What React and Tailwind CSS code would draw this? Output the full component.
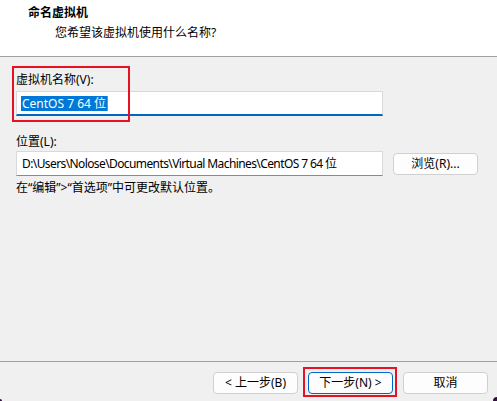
import React from 'react';

const font = "font-['Noto_Sans','Noto_Sans_CJK_SC',sans-serif]";

function Button({ children, primary }) {
  return (
    <button
      className={
        'h-[22px] w-[85px] rounded-[4px] bg-[#fdfdfd] text-[12px] leading-none text-black ' +
        (primary ? 'border border-[#0067c0]' : 'border border-[#d0d0d0]')
      }
    >
      {children}
    </button>
  );
}

export default function App() {
  return (
    <div className={`relative flex h-[401px] w-[497px] flex-col overflow-hidden bg-[#f0f0f0] text-[12px] text-black ${font}`}>
      {/* header */}
      <div className="h-[57px] border-b border-[#a0a0a0] bg-white">
        <div className="pl-[28px] pt-[5px] text-[12px] font-bold leading-[16px]">命名虚拟机</div>
        <div className="pl-[55px] pt-[4px] leading-[16px]">您希望该虚拟机使用什么名称?</div>
      </div>

      {/* form */}
      <div className="px-[16px]">
        <div className="pt-[15px] leading-[16px]">虚拟机名称(V):</div>
        <div className="mt-[3px] flex h-[25px] w-[367px] items-center border border-b-2 border-[#d9d9d9] border-b-[#0067c0] bg-white pl-[4px]">
          <span className="bg-[#0078d7] px-[1px] leading-[15px] text-white">CentOS 7 64 位</span>
          <span className="h-[15px] w-[1px] bg-[#e07b00]" />
        </div>

        <div className="mt-[18px] leading-[16px]">位置(L):</div>
        <div className="mt-[1px] flex items-center gap-[10px]">
          <div className="flex h-[25px] w-[367px] items-center border border-[#d9d9d9] border-b-[#8a8a8a] bg-white pl-[5px] tracking-[-0.6px] whitespace-nowrap">
            D:\Users\Nolose\Documents\Virtual Machines\CentOS 7 64 位
          </div>
          <Button>浏览(R)...</Button>
        </div>
        <div className="mt-[4px] leading-[16px]">在“编辑”&gt;“首选项”中可更改默认位置。</div>
      </div>

      <div className="flex-1" />

      {/* footer buttons */}
      <div className="flex justify-end gap-[10px] border-t border-[#a0a0a0] pb-[7px] pr-[9px] pt-[10px]">
        <Button>&lt; 上一步(B)</Button>
        <Button primary>下一步(N) &gt;</Button>
        <Button>取消</Button>
      </div>

      {/* red highlight frames */}
      <div className="pointer-events-none absolute left-[12px] top-[66px] h-[56px] w-[118px] border-2 border-[#e81123]" />
      <div className="pointer-events-none absolute left-[303px] top-[367px] h-[30px] w-[94px] border-2 border-[#e81123]" />

      {/* desktop corners */}
      <div className="absolute bottom-0 right-0 h-[4px] w-[4px] rounded-tl-full bg-[#3a0a45]" />
      <div className="absolute bottom-0 left-0 h-[2px] w-[2px] rounded-tr-full bg-[#3a0a45]" />
    </div>
  );
}
